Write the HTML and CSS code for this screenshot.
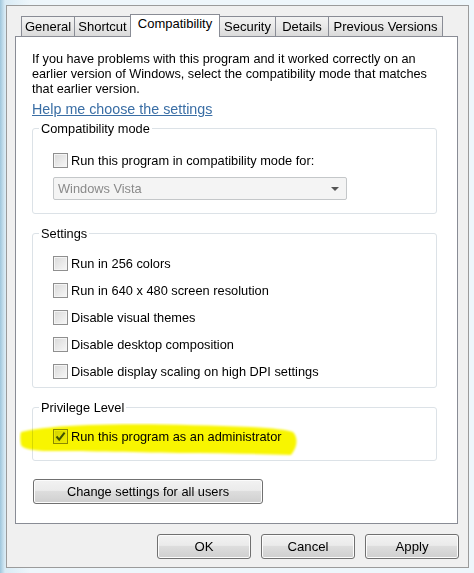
FILE: index.html
```html
<!DOCTYPE html>
<html lang="en">
<head>
<meta charset="UTF-8">
<title>Properties - Compatibility</title>
<link rel="stylesheet" href="styles.css">
</head>
<body>

<div class="window">
    <div class="tabs">
        <div class="tab tab-general">General</div>
        <div class="tab tab-shortcut">Shortcut</div>
        <div class="tab tab-compat active">Compatibility</div>
        <div class="tab tab-security">Security</div>
        <div class="tab tab-details">Details</div>
        <div class="tab tab-versions">Previous Versions</div>
    </div>

    <div class="panel">
        <p class="intro">If you have problems with this program and it worked correctly on an<br>
        earlier version of Windows, select the compatibility mode that matches<br>
        that earlier version.</p>
        <a class="help-link" href="#">Help me choose the settings</a>

        <fieldset class="group group-compat">
            <legend>Compatibility mode</legend>
            <label class="check"><span class="box"></span>Run this program in compatibility mode for:</label>
            <div class="combo">
                <span>Windows Vista</span>
                <span class="arrow"></span>
            </div>
        </fieldset>

        <fieldset class="group group-settings">
            <legend>Settings</legend>
            <label class="check"><span class="box"></span>Run in 256 colors</label>
            <label class="check"><span class="box"></span>Run in 640 x 480 screen resolution</label>
            <label class="check"><span class="box"></span>Disable visual themes</label>
            <label class="check"><span class="box"></span>Disable desktop composition</label>
            <label class="check"><span class="box"></span>Disable display scaling on high DPI settings</label>
        </fieldset>

        <fieldset class="group group-privilege">
            <legend>Privilege Level</legend>
            <label class="check"><span class="box checked">
                <svg width="11" height="11" viewBox="0 0 11 11"><path d="M1.5 5.5 L4.2 8.6 L9.6 1.6" fill="none" stroke="#3f5477" stroke-width="2"/></svg>
            </span>Run this program as an administrator</label>
            <!-- marker highlight drawn over the row -->
            <svg class="marker" width="282" height="36" viewBox="0 0 282 36">
                <defs><filter id="soft"><feGaussianBlur stdDeviation="0.8"/></filter></defs>
                <path d="M2 9 C20 5 40 3 70 2 C120 0 180 2 232 4 C255 5 268 7 274 9 C279 14 279 24 272 32 C240 31 200 30 160 30 C110 29 60 28 24 28 C10 27 3 25 2 22 C1 17 1 12 2 9 Z" fill="#f8f500" filter="url(#soft)"/>
            </svg>
        </fieldset>

        <button class="btn btn-wide" type="button">Change settings for all users</button>
    </div>

    <div class="footer">
        <button class="btn" type="button">OK</button>
        <button class="btn" type="button">Cancel</button>
        <button class="btn" type="button">Apply</button>
    </div>
</div>

</body>
</html>
```

FILE: styles.css
```css
body {
    margin: 0;
    width: 474px;
    height: 573px;
    overflow: hidden;
    font-family: "Liberation Sans", Arial, sans-serif;
    font-size: 12.8px;
    color: #000;
    background: linear-gradient(to right, #9fc6dc 0, #d9ebf5 5px, #eef6fb 30px, #eef6fb 100%);
}
.window {
    box-sizing: border-box;
    width: 463px;
    height: 563px;
    margin: 5px 0 0 6px;
    padding: 8px 10px 0 8px;
    background-color: #f0f0f0;
    border: 1px solid #9b9b9b;
}

/* tab strip */
.tabs {
    display: flex;
    align-items: flex-end;
    height: 22px;
    padding-left: 6px;
}
.tab {
    box-sizing: border-box;
    height: 20px;
    margin-left: -1px;
    border: 1px solid #898c95;
    border-bottom: none;
    background: linear-gradient(#f3f3f3, #e9e9e9 50%, #dadada);
    text-align: center;
    line-height: 19px;
    font-size: 13px;
}
.tab:first-child { margin-left: 0; }
.tab-general { width: 54px; }
.tab-shortcut { width: 57px; }
.tab-compat { width: 90px; }
.tab-security { width: 57px; }
.tab-details { width: 54px; }
.tab-versions { width: 115px; }
.tab.active {
    position: relative;
    z-index: 1;
    height: 23px;
    margin-bottom: -1px;
    background: #fff;
    line-height: 18px;
}

/* white page */
.panel {
    box-sizing: border-box;
    height: 488px;
    padding: 15px 20px 0 16px;
    background-color: #fff;
    border: 1px solid #898c95;
}
.intro {
    margin: 0;
    line-height: 15px;
    font-size: 12.7px;
}
.help-link {
    display: block;
    margin-top: 5px;
    line-height: 15px;
    font-size: 14.3px;
    color: #3a6ea5;
}

/* group boxes */
.group {
    position: relative;
    margin: 0;
    padding: 0 0 0 20px;
    border: 1px solid #dce2e7;
    border-radius: 3px;
}
.group legend {
    margin-left: -14px;
    padding: 0 2px;
    line-height: 15px;
}
.group-compat {
    margin-top: 4px;
    padding-top: 17px;
    padding-bottom: 13px;
}
.group-settings {
    margin-top: 12px;
    padding-top: 15px;
    padding-bottom: 8px;
}
.group-privilege {
    margin-top: 12px;
    padding-top: 14px;
    padding-bottom: 16px;
}
.group-settings .check + .check {
    margin-top: 12px;
}

.check {
    display: flex;
    align-items: center;
    gap: 3px;
    height: 15px;
}
.box {
    box-sizing: border-box;
    display: flex;
    align-items: center;
    justify-content: center;
    width: 15px;
    height: 15px;
    border: 1px solid #8f8f8f;
    background: linear-gradient(135deg, #d9d9d9, #f7f7f7);
    box-shadow: inset 0 0 0 1px #f4f4f4;
}

.combo {
    box-sizing: border-box;
    display: flex;
    align-items: center;
    justify-content: space-between;
    width: 294px;
    height: 23px;
    margin-top: 9px;
    padding: 0 7px 0 4px;
    border: 1px solid #c4c7c9;
    border-radius: 2px;
    background-color: #f4f4f4;
    color: #8a8a8a;
}
.arrow {
    width: 0;
    height: 0;
    border-left: 4px solid transparent;
    border-right: 4px solid transparent;
    border-top: 4px solid #555;
}

.marker {
    position: absolute;
    left: -14px;
    top: 8px;
    mix-blend-mode: multiply;
}

/* buttons */
.btn {
    box-sizing: border-box;
    width: 94px;
    height: 25px;
    padding: 0;
    border: 1px solid #707070;
    border-radius: 3px;
    background: linear-gradient(#f2f2f2, #ebebeb 45%, #dddddd 50%, #cfcfcf);
    box-shadow: inset 0 0 0 1px #fcfcfc;
    font-family: "Liberation Sans", Arial, sans-serif;
    font-size: 13.2px;
    color: #000;
}
.btn-wide {
    display: block;
    width: 230px;
    margin: 18px 0 0 1px;
    font-size: 12.8px;
}
.footer {
    display: flex;
    justify-content: flex-end;
    gap: 10px;
    margin: 10px -1px 0 0;
}
```
